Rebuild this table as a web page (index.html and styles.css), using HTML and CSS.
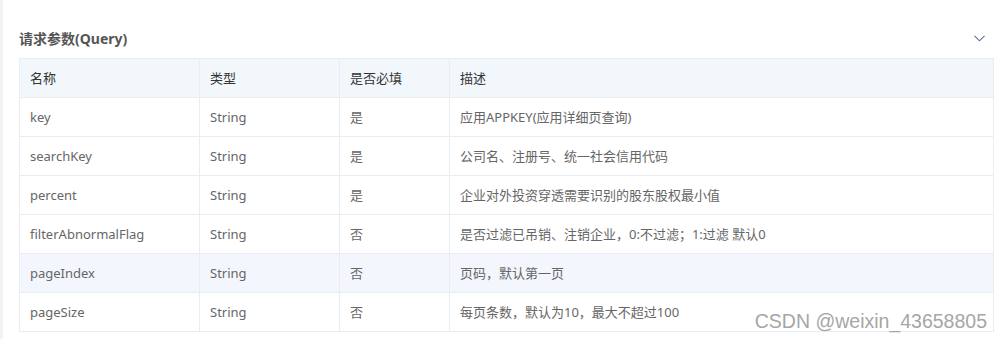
FILE: index.html
```html
<!DOCTYPE html>
<html lang="zh">
<head>
<meta charset="utf-8">
<link rel="stylesheet" href="styles.css">
</head>
<body>
<div class="page">
  <div class="section">
    <div class="section-head">
      <span class="title">请求参数(Query)</span>
      <svg class="chevron" width="11" height="7" viewBox="0 0 11 7"><path d="M0.5 0.8 L5.5 5.8 L10.5 0.8" fill="none" stroke="#5a6f8f" stroke-width="1.1"/></svg>
    </div>
    <table class="params">
      <colgroup>
        <col class="c1"><col class="c2"><col class="c3"><col class="c4">
      </colgroup>
      <thead>
        <tr><th>名称</th><th>类型</th><th>是否必填</th><th>描述</th></tr>
      </thead>
      <tbody>
        <tr><td>key</td><td>String</td><td>是</td><td>应用APPKEY(应用详细页查询)</td></tr>
        <tr><td>searchKey</td><td>String</td><td>是</td><td>公司名、注册号、统一社会信用代码</td></tr>
        <tr><td>percent</td><td>String</td><td>是</td><td>企业对外投资穿透需要识别的股东股权最小值</td></tr>
        <tr><td>filterAbnormalFlag</td><td>String</td><td>否</td><td>是否过滤已吊销、注销企业，0:不过滤；1:过滤 默认0</td></tr>
        <tr class="hover"><td>pageIndex</td><td>String</td><td>否</td><td>页码，默认第一页</td></tr>
        <tr><td>pageSize</td><td>String</td><td>否</td><td>每页条数，默认为10，最大不超过100</td></tr>
      </tbody>
    </table>
  </div>
  <div class="watermark">CSDN @weixin_43658805</div>
</div>
</body>
</html>
```

FILE: styles.css
```css
html, body {
  margin: 0;
  padding: 0;
  background: #fff;
}
body {
  font-family: "Noto Sans", "Noto Sans CJK SC", "Microsoft YaHei", sans-serif;
  font-size: 13px;
  color: #666;
}
.page {
  position: relative;
  height: 339px;
  border-left: 3px solid #f3f3f3;
  padding-left: 16px;
  padding-right: 9px;
  box-sizing: border-box;
  overflow: hidden;
}
.section {
  padding-top: 29px;
}
.section-head {
  display: flex;
  align-items: center;
  justify-content: space-between;
  height: 20px;
  margin-bottom: 9px;
  padding-right: 8px;
}
.title {
  font-weight: bold;
  color: #555;
  font-size: 14px;
  line-height: 20px;
}
.chevron {
  display: block;
  margin-top: -2px;
}
.params {
  border-collapse: collapse;
  table-layout: fixed;
  width: 974px;
}
.c1 { width: 180px; }
.c2 { width: 140px; }
.c3 { width: 110px; }
.c4 { width: 544px; }
.params th,
.params td {
  border: 1px solid #e8edf2;
  height: 38px;
  padding: 0 10px;
  text-align: left;
  font-weight: normal;
  vertical-align: middle;
  line-height: 18px;
  white-space: nowrap;
}
.params th {
  background: #f1f7fb;
  color: #333;
}
.params tr.hover td {
  background: #f3f7fd;
}
.watermark {
  position: absolute;
  right: 15px;
  bottom: 8px;
  font-family: "Liberation Sans", Arial, sans-serif;
  font-size: 19.5px;
  color: #a6a6a6;
  text-shadow: 0 0 1px #fff;
  line-height: 20px;
}
```
